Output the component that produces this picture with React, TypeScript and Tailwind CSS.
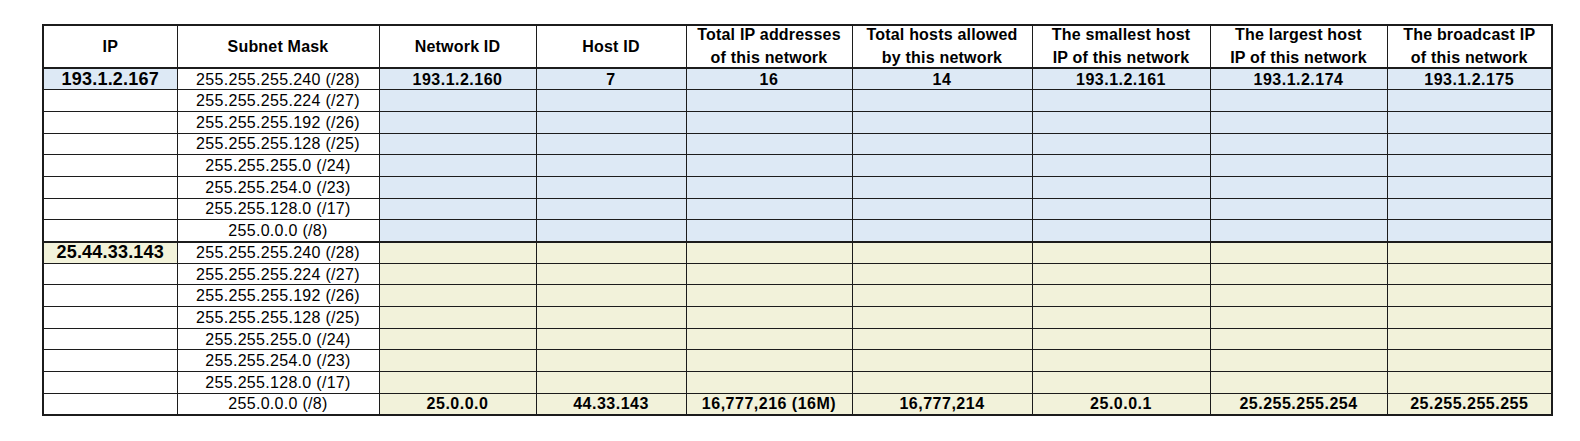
import React from 'react';

const headers: string[][] = [
  ['IP'],
  ['Subnet Mask'],
  ['Network ID'],
  ['Host ID'],
  ['Total IP addresses', 'of this network'],
  ['Total hosts allowed', 'by this network'],
  ['The smallest host', 'IP of this network'],
  ['The largest host', 'IP of this network'],
  ['The broadcast IP', 'of this network'],
];

const colWidths = ['w-[134px]', 'w-[202px]', 'w-[157px]', 'w-[150px]', 'w-[166px]', 'w-[180px]', 'w-[178px]', 'w-[177px]', 'w-[165px]'];

const masks = [
  '255.255.255.240 (/28)',
  '255.255.255.224 (/27)',
  '255.255.255.192 (/26)',
  '255.255.255.128 (/25)',
  '255.255.255.0 (/24)',
  '255.255.254.0 (/23)',
  '255.255.128.0 (/17)',
  '255.0.0.0 (/8)',
];

interface Group {
  ip: string;
  fill: string;
  valueRow: number;
  values: string[];
}

const groups: Group[] = [
  {
    ip: '193.1.2.167',
    fill: 'bg-[#dde9f5]',
    valueRow: 0,
    values: ['193.1.2.160', '7', '16', '14', '193.1.2.161', '193.1.2.174', '193.1.2.175'],
  },
  {
    ip: '25.44.33.143',
    fill: 'bg-[#f2f2da]',
    valueRow: 7,
    values: ['25.0.0.0', '44.33.143', '16,777,216 (16M)', '16,777,214', '25.0.0.1', '25.255.255.254', '25.255.255.255'],
  },
];

const cell = 'border border-[#1c1c1c] p-0 text-center align-middle';

export default function App() {
  return (
    <div className="min-h-[441px] bg-white pl-[42px] pt-[24px] text-black" style={{ fontFamily: '"Liberation Sans", Arial, sans-serif' }}>
      <table className="table-fixed border-collapse border-2 border-[#1c1c1c] w-[1511px]">
        <colgroup>
          {colWidths.map((w, i) => (
            <col key={i} className={w} />
          ))}
        </colgroup>
        <thead>
          <tr className="h-[42px]">
            {headers.map((lines, i) => (
              <th key={i} className={`${cell} border-b-2 text-[16px] font-bold leading-[18px] tracking-[0.2px]`}>
                {lines.map((l, j) => (
                  <div key={j} className={j > 0 ? 'mt-[5px]' : ''}>
                    {l}
                  </div>
                ))}
              </th>
            ))}
          </tr>
        </thead>
        <tbody>
          {groups.map((g, gi) =>
            masks.map((m, ri) => {
              const sep = gi === 1 && ri === 0 ? 'border-t-2' : '';
              return (
                <tr key={`${gi}-${ri}`} className="h-[21.7px]">
                  <td className={`${cell} ${ri === 0 ? g.fill : 'bg-white'} ${sep} text-[18px] font-bold leading-[19px] tracking-[0.2px]`}>
                    {ri === 0 ? g.ip : ''}
                  </td>
                  <td className={`${cell} bg-white ${sep} text-[16px] leading-[19px] tracking-[0.3px]`}>{m}</td>
                  {g.values.map((v, vi) => (
                    <td key={vi} className={`${cell} ${g.fill} ${sep} text-[16px] font-bold leading-[19px] tracking-[0.5px]`}>
                      {ri === g.valueRow ? v : ''}
                    </td>
                  ))}
                </tr>
              );
            })
          )}
        </tbody>
      </table>
    </div>
  );
}
